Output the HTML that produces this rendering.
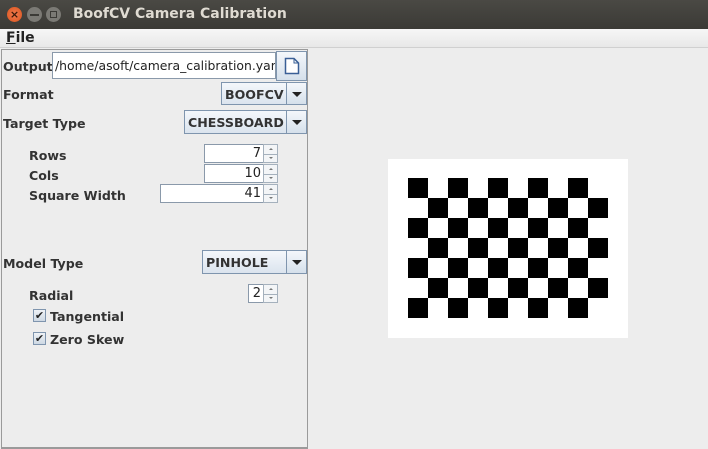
<!DOCTYPE html>
<html><head><style>
*{margin:0;padding:0;box-sizing:border-box}
body{width:708px;height:449px;background:#ededed;position:relative;overflow:hidden;font-family:"DejaVu Sans","Liberation Sans",sans-serif}
.a{position:absolute}
.lbl{position:absolute;font-weight:bold;font-size:12.6px;color:#333;white-space:nowrap}
.combo{position:absolute;border:1px solid #7f95ae;background:linear-gradient(#f4f7fb,#dbe4ee);font-weight:bold;font-size:12.6px;color:#333;padding:4px 0 0 3px;white-space:nowrap}
.combo .arr{position:absolute;right:0;top:0;bottom:0;width:20px;border-left:1px solid #7f95ae;background:linear-gradient(#f4f7fb,#d5e0eb)}
.combo .arr:after{content:"";position:absolute;left:5px;top:9px;border-left:5px solid transparent;border-right:5px solid transparent;border-top:5px solid #222}
.fld{position:absolute;background:#fff;border:1px solid #8a99aa;border-right:none;font-size:13px;text-align:right;padding:1px 2px 0 0;color:#222}
.sp{position:absolute;width:15px;border:1px solid #a5b1bd;background:#f3f5f7}
.sp:before,.sp:after{content:"";position:absolute;left:5px;border-left:2px solid transparent;border-right:2px solid transparent}
.sp:before{top:3px;border-bottom:2px solid #777}
.sp:after{bottom:3px;border-top:2px solid #777}
.sp i{position:absolute;left:0;right:0;top:50%;border-top:1px solid #a5b1bd}
.cb{position:absolute;width:13px;height:13px;border:1px solid #7f95ae;background:linear-gradient(#eef2f6,#cdd8e3);font-size:11px;line-height:11px;text-align:center;color:#222;font-weight:bold}
</style></head><body>
<div class="a" style="left:0;top:0;width:708px;height:29px;background:linear-gradient(#4a4944,#3b3a36)"></div>
<div class="a" style="left:7px;top:7px;width:15px;height:15px;border-radius:50%;background:radial-gradient(#f27b4f,#d9541d);color:#3a1a0a;font-size:11px;line-height:15px;text-align:center;font-weight:bold">×</div>
<div class="a" style="left:27px;top:7px;width:15px;height:15px;border-radius:50%;background:#7b7a75"></div>
<div class="a" style="left:30px;top:14px;width:9px;height:2px;background:#3b3a36"></div>
<div class="a" style="left:46px;top:7px;width:15px;height:15px;border-radius:50%;background:#7b7a75"></div>
<div class="a" style="left:50px;top:11px;width:7px;height:7px;border:1px solid #3b3a36"></div>
<div class="lbl" style="left:73px;top:6px;color:#dfdbd2;font-size:14px">BoofCV Camera Calibration</div>
<div class="a" style="left:0;top:29px;width:708px;height:19px;background:linear-gradient(#f6f6f6,#e8e8e8);border-bottom:1px solid #d0d0d0"></div>
<div class="a" style="left:6px;top:30px;font-size:14px;color:#222;font-weight:bold"><u>F</u>ile</div>
<div class="a" style="left:1px;top:49px;width:307px;height:400px;border:1px solid #9a9a9a;border-bottom:2px solid #9a9a9a"></div>

<div class="lbl" style="left:3px;top:59px">Output</div>
<div class="a" style="left:52px;top:52px;width:224px;height:27px;background:#fff;border:1px solid #8a99aa;font-size:12.4px;padding:5px 0 0 2px;color:#222;overflow:hidden;white-space:nowrap">/home/asoft/camera_calibration.yaml</div>
<div class="a" style="left:276px;top:51px;width:31px;height:30px;border:1px solid #7f95ae;background:linear-gradient(#f4f7fb,#d5e0eb)"></div>
<svg class="a" style="left:284px;top:57px" width="16" height="18"><path d="M1.5 1.5H10l4.5 4.5V16.5H1.5Z" fill="#fff" stroke="#3a5f96" stroke-width="1.5"/><path d="M10 1.5V6h4.5" fill="none" stroke="#3a5f96"/></svg>

<div class="lbl" style="left:3px;top:87px">Format</div>
<div class="combo" style="left:221px;top:82px;width:86px;height:23px">BOOFCV<div class="arr"></div></div>
<div class="lbl" style="left:3px;top:116px">Target Type</div>
<div class="combo" style="left:184px;top:110px;width:123px;height:24px">CHESSBOARD<div class="arr"></div></div>

<div class="lbl" style="left:29px;top:148px">Rows</div>
<div class="fld" style="left:204px;top:144px;width:59px;height:19px">7</div><div class="sp" style="left:263px;top:144px;height:19px"><i></i></div>
<div class="lbl" style="left:29px;top:168px">Cols</div>
<div class="fld" style="left:204px;top:164px;width:59px;height:19px">10</div><div class="sp" style="left:263px;top:164px;height:19px"><i></i></div>
<div class="lbl" style="left:29px;top:188px">Square Width</div>
<div class="fld" style="left:160px;top:184px;width:103px;height:19px">41</div><div class="sp" style="left:263px;top:184px;height:19px"><i></i></div>

<div class="lbl" style="left:3px;top:256px">Model Type</div>
<div class="combo" style="left:202px;top:250px;width:105px;height:24px">PINHOLE<div class="arr"></div></div>
<div class="lbl" style="left:29px;top:288px">Radial</div>
<div class="fld" style="left:248px;top:284px;width:15px;height:19px">2</div><div class="sp" style="left:263px;top:284px;height:19px"><i></i></div>
<div class="cb" style="left:33px;top:309px">✔</div><div class="lbl" style="left:50px;top:309px">Tangential</div>
<div class="cb" style="left:33px;top:332px">✔</div><div class="lbl" style="left:50px;top:332px">Zero Skew</div>

<svg class="a" style="left:388px;top:159px" width="240" height="179">
<rect width="240" height="179" fill="#fff"/>
<g fill="#000">
<rect x="20" y="19" width="20" height="20"/><rect x="60" y="19" width="20" height="20"/><rect x="100" y="19" width="20" height="20"/><rect x="140" y="19" width="20" height="20"/><rect x="180" y="19" width="20" height="20"/>
<rect x="40" y="39" width="20" height="20"/><rect x="80" y="39" width="20" height="20"/><rect x="120" y="39" width="20" height="20"/><rect x="160" y="39" width="20" height="20"/><rect x="200" y="39" width="20" height="20"/>
<rect x="20" y="59" width="20" height="20"/><rect x="60" y="59" width="20" height="20"/><rect x="100" y="59" width="20" height="20"/><rect x="140" y="59" width="20" height="20"/><rect x="180" y="59" width="20" height="20"/>
<rect x="40" y="79" width="20" height="20"/><rect x="80" y="79" width="20" height="20"/><rect x="120" y="79" width="20" height="20"/><rect x="160" y="79" width="20" height="20"/><rect x="200" y="79" width="20" height="20"/>
<rect x="20" y="99" width="20" height="20"/><rect x="60" y="99" width="20" height="20"/><rect x="100" y="99" width="20" height="20"/><rect x="140" y="99" width="20" height="20"/><rect x="180" y="99" width="20" height="20"/>
<rect x="40" y="119" width="20" height="20"/><rect x="80" y="119" width="20" height="20"/><rect x="120" y="119" width="20" height="20"/><rect x="160" y="119" width="20" height="20"/><rect x="200" y="119" width="20" height="20"/>
<rect x="20" y="139" width="20" height="20"/><rect x="60" y="139" width="20" height="20"/><rect x="100" y="139" width="20" height="20"/><rect x="140" y="139" width="20" height="20"/><rect x="180" y="139" width="20" height="20"/>
</g></svg>
</body></html>
